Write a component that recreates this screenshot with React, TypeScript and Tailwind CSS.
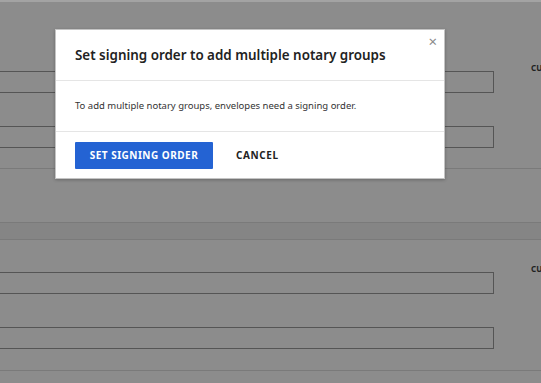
export default function App() {
    const field = 'h-[22px] border border-[#555555] bg-[#8c8c8c]';

    return (
        <div className="relative w-[541px] h-[383px] overflow-hidden bg-[#8c8c8c] border-t-2 border-[#a3a3a3]" style={{ fontFamily: '"Noto Sans", "Open Sans", sans-serif' }}>
            {/* page behind the overlay */}
            <div className="flex h-[167px] border-b border-[#7a7a7a]">
                <div className="w-[502px] -ml-2 shrink-0 pt-[69px] flex flex-col gap-[33px]">
                    <div className={field} />
                    <div className={field} />
                </div>
                <div className="pl-[37px] pt-[60px] text-[8px] font-bold text-[#222] whitespace-nowrap">CUSTOM</div>
            </div>
            <div className="h-[53px]" />
            <div className="h-[18px] bg-[#858585] border-y border-[#7a7a7a]" />
            <div className="flex h-[131px] border-b border-[#7a7a7a]">
                <div className="w-[502px] -ml-2 shrink-0 pt-[32px] flex flex-col gap-[33px]">
                    <div className={field} />
                    <div className={field} />
                </div>
                <div className="pl-[37px] pt-[23px] text-[8px] font-bold text-[#222] whitespace-nowrap">CUSTOM</div>
            </div>

            {/* dialog */}
            <div className="absolute left-[55px] top-[27px] w-[390px] bg-white border border-[#c4c4c4] shadow-[0_1px_3px_rgba(0,0,0,0.25)]">
                <button className="absolute right-[7px] top-[4px] text-[#8a8a8a] text-[15px] leading-none">×</button>
                <div className="h-[51px] flex items-center px-[19px] border-b border-[#e5e5e5]">
                    <h2 className="text-[13.4px] font-semibold text-[#222]">Set signing order to add multiple notary groups</h2>
                </div>
                <div className="h-[51px] flex items-center px-[19px] border-b border-[#e5e5e5]">
                    <p className="text-[9.5px] text-[#333]">To add multiple notary groups, envelopes need a signing order.</p>
                </div>
                <div className="h-[46px] flex items-center gap-[23px] px-[19px]">
                    <button className="h-[27px] w-[138px] bg-[#2463d3] rounded-[1px] text-white text-[10px] font-bold tracking-[0.05em]">SET SIGNING ORDER</button>
                    <button className="text-[10px] font-bold tracking-[0.06em] text-[#222]">CANCEL</button>
                </div>
            </div>
        </div>
    );
}
